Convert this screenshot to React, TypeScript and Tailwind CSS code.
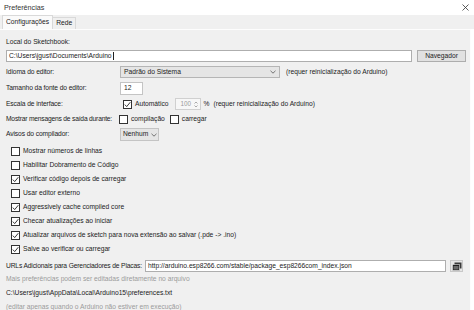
import React from 'react';

const font = { fontFamily: '"Liberation Sans", Arial, sans-serif' };

function Check({ on = false }: { on?: boolean }) {
  return (
    <span className="flex h-[9px] w-[9px] shrink-0 items-center justify-center border border-[#333] bg-white">
      {on && (
        <svg width="7" height="7" viewBox="0 0 7 7">
          <path d="M0.8 3.6 L2.7 5.6 L6.3 1.2" fill="none" stroke="#222" strokeWidth="0.9" />
        </svg>
      )}
    </span>
  );
}

function Chevron() {
  return (
    <svg width="6" height="4" viewBox="0 0 6 4">
      <path d="M0.5 0.8 L3 3.2 L5.5 0.8" fill="none" stroke="#555" strokeWidth="0.8" />
    </svg>
  );
}

function Row({ label, children, h = 'h-[12px]', mt = 'mt-[3px]' }: { label: string; children: React.ReactNode; h?: string; mt?: string }) {
  return (
    <div className={`flex items-center ${h} ${mt}`}>
      <span className="w-[114px] shrink-0 tracking-[-0.1px]">{label}</span>
      {children}
    </div>
  );
}

const options: [string, boolean][] = [
  ['Mostrar números de linhas', false],
  ['Habilitar Dobramento de Código', false],
  ['Verificar código depois de carregar', true],
  ['Usar editor externo', false],
  ['Aggressively cache compiled core', true],
  ['Checar atualizações ao iniciar', true],
  ['Atualizar arquivos de sketch para nova extensão ao salvar (.pde -> .ino)', true],
  ['Salve ao verificar ou carregar', true],
];

export default function App() {
  return (
    <div className="flex h-[310px] w-[474px] flex-col overflow-hidden whitespace-nowrap bg-white text-[6.7px] leading-none text-[#222]" style={font}>
      {/* title bar */}
      <div className="flex h-[15px] shrink-0 items-center justify-between bg-white pl-[4px] pr-[5px] text-[7.2px] text-[#333]">
        <span>Preferências</span>
        <svg width="7" height="7" viewBox="0 0 7 7">
          <path d="M0.5 0.5 L6.5 6.5 M6.5 0.5 L0.5 6.5" stroke="#333" strokeWidth="0.8" />
        </svg>
      </div>

      {/* tabs */}
      <div className="flex h-[14px] shrink-0 items-end bg-[#f0f0f0] pl-[2px]">
        <div className="flex h-[14px] items-center border border-b-0 border-[#d9d9d9] bg-[#fafafa] px-[3px]">Configurações</div>
        <div className="flex h-[12px] items-center border-t border-r border-[#d9d9d9] bg-[#f0f0f0] px-[3px]">Rede</div>
      </div>

      {/* panel */}
      <div className="mr-[3px] flex flex-1 flex-col border-t border-r border-[#fdfdfd] bg-[#f0f0f0] pl-[6px] pr-[4px] pt-[6px]">
        <div className="flex h-[12px] items-center">Local do Sketchbook:</div>

        <div className="mt-[2px] flex h-[12px] items-stretch">
          <div className="flex flex-1 items-center border border-[#aeaeae] bg-white pl-[2px]">
            C:\Users\jgust\Documents\Arduino<span className="ml-px h-[8px] w-px bg-[#222]" />
          </div>
          <div className="ml-[5px] flex w-[49px] items-center justify-center border border-[#adadad] bg-[#e1e1e1]">Navegador</div>
        </div>

        <Row label="Idioma do editor:" mt="mt-[4px]">
          <div className="flex h-full w-[160px] items-center justify-between border border-[#b5b5b5] bg-[#e5e5e5] pl-[3px] pr-[3px]">
            <span>Padrão do Sistema</span>
            <Chevron />
          </div>
          <span className="ml-[6px]">(requer reinicialização do Arduino)</span>
        </Row>

        <Row label="Tamanho da fonte do editor:" h="h-[13px]" mt="mt-[4px]">
          <div className="flex h-full w-[23px] items-center border border-[#c4c4c4] bg-white pl-[3px]">12</div>
        </Row>

        <Row label="Escala de interface:">
          <span className="ml-[3px]"><Check on /></span>
          <span className="ml-[3px]">Automático</span>
          <div className="ml-[7px] flex h-full w-[26px] items-center justify-between border border-[#d0d0d0] bg-[#f7f7f7] pl-[4px] pr-[2px] text-[#9a9a9a]">
            <span className="text-[6.3px]">100</span>
            <svg width="4" height="7" viewBox="0 0 4 7">
              <path d="M0.5 2.5 L2 1 L3.5 2.5 M0.5 4.5 L2 6 L3.5 4.5" fill="none" stroke="#888" strokeWidth="0.7" />
            </svg>
          </div>
          <span className="ml-[2px]">%</span>
          <span className="ml-[4px]">(requer reinicialização do Arduino)</span>
        </Row>

        <div className="mt-[3px] flex h-[12px] items-center">
          <span className="w-[113px] shrink-0 tracking-[-0.2px]">Mostrar mensagens de saída durante:</span>
          <Check />
          <span className="ml-[3px]">compilação</span>
          <span className="ml-[5px]"><Check /></span>
          <span className="ml-[3px]">carregar</span>
        </div>

        <Row label="Avisos do compilador:" h="h-[13px]">
          <div className="flex h-full w-[39px] items-center gap-[3px] border border-[#c4c4c4] bg-[#e5e5e5] pl-[2px]">
            <span>Nenhum</span>
            <Chevron />
          </div>
        </Row>

        <div className="mt-[3px] flex flex-col pl-[5px]">
          {options.map(([t, on]) => (
            <div key={t} className="flex h-[14px] items-center gap-[3px]">
              <Check on={on} />
              <span>{t}</span>
            </div>
          ))}
        </div>

        <div className="mt-[4px] flex h-[12px] items-stretch">
          <span className="flex w-[139px] shrink-0 items-center tracking-[-0.15px]">URLs Adicionais para Gerenciadores de Placas:</span>
          <div className="flex flex-1 items-center border border-[#aeaeae] bg-white pl-[2px]">http://arduino.esp8266.com/stable/package_esp8266com_index.json</div>
          <div className="ml-[4px] mr-[3px] flex w-[13px] items-center justify-center border border-[#c8c8c8] bg-[#e6e6e6]">
            <svg width="10" height="9" viewBox="0 0 10 9">
              <rect x="2.5" y="0.5" width="7" height="6" fill="#3a3a3a" />
              <rect x="0.5" y="2.5" width="7" height="6" fill="#1f1f1f" stroke="#e6e6e6" strokeWidth="0.6" />
              <rect x="1.5" y="4" width="5" height="3.5" fill="#6a6a6a" />
            </svg>
          </div>
        </div>

        <div className="flex h-[14px] items-center text-[#9b9b9b]">Mais preferências podem ser editadas diretamente no arquivo</div>
        <div className="flex h-[14px] items-center">C:\Users\jgust\AppData\Local\Arduino15\preferences.txt</div>
        <div className="flex h-[14px] items-center text-[#9b9b9b]">(editar apenas quando o Arduino não estiver em execução)</div>
      </div>
    </div>
  );
}
